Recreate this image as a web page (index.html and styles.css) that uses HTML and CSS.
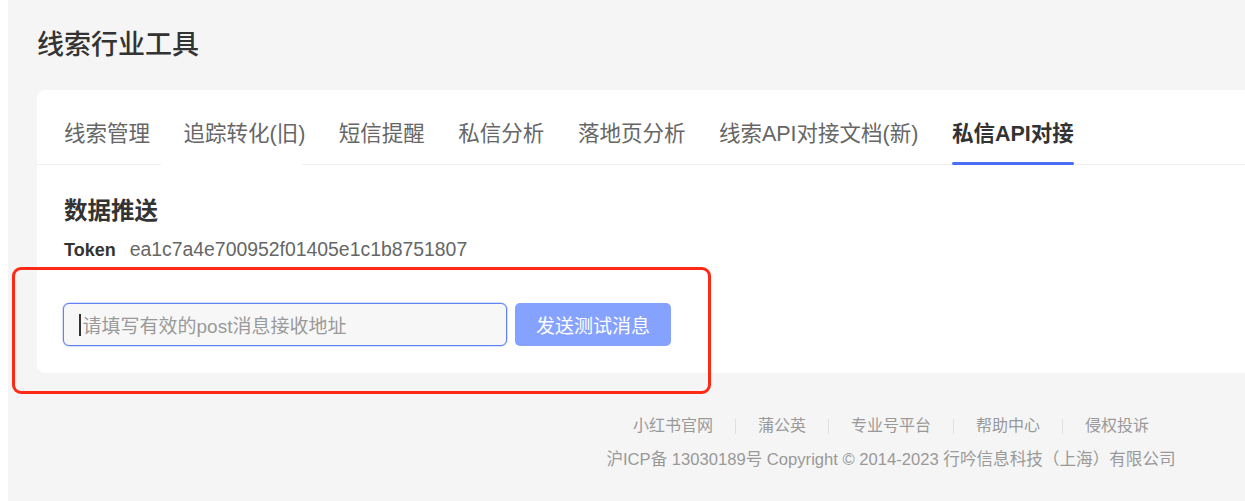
FILE: index.html
```html
<!DOCTYPE html>
<html lang="zh-CN">
<head>
<meta charset="utf-8">
<title>线索行业工具</title>
<link rel="stylesheet" href="styles.css">
</head>
<body>
<div class="page">
  <div class="main">
    <h1 class="page-title">线索行业工具</h1>
    <div class="card">
      <div class="tabs">
        <div class="tab">线索管理</div>
        <div class="tab tab-gap">追踪转化(旧)</div>
        <div class="tab">短信提醒</div>
        <div class="tab">私信分析</div>
        <div class="tab">落地页分析</div>
        <div class="tab">线索API对接文档(新)</div>
        <div class="tab active">私信API对接</div>
      </div>
      <div class="card-body">
        <h2 class="section-title">数据推送</h2>
        <div class="token-row"><span class="token-label">Token</span><span class="token-value">ea1c7a4e700952f01405e1c1b8751807</span></div>
        <div class="form-row">
          <div class="input"><span class="caret"></span><span class="placeholder">请填写有效的post消息接收地址</span></div>
          <button class="btn" type="button">发送测试消息</button>
        </div>
      </div>
    </div>
    <footer class="footer">
      <div class="links">
        <span class="link">小红书官网</span><span class="sep"></span>
        <span class="link">蒲公英</span><span class="sep"></span>
        <span class="link">专业号平台</span><span class="sep"></span>
        <span class="link">帮助中心</span><span class="sep"></span>
        <span class="link">侵权投诉</span>
      </div>
      <div class="copyright">沪ICP备 13030189号 Copyright © 2014-2023 行吟信息科技（上海）有限公司</div>
    </footer>
  </div>
  <div class="annotation"></div>
</div>
</body>
</html>
```
FILE: styles.css
```css
html, body {
  margin: 0;
  padding: 0;
  height: 501px;
  overflow: hidden;
  background: #ffffff;
}
body {
  font-family: "Liberation Sans", "Noto Sans CJK SC", sans-serif;
  color: #333333;
}
.page {
  position: relative;
  margin-left: 8px;
  height: 501px;
  background: #f5f5f5;
}
.main {
  padding: 26px 0 0 29px;
}
.page-title {
  margin: 0 0 26px 0;
  font-size: 27px;
  line-height: 38px;
  font-weight: 500;
  color: #333333;
}
.card {
  background: #ffffff;
  border-radius: 8px 0 0 8px;
  padding-bottom: 27px;
}
.tabs {
  display: flex;
  gap: 33.5px;
  padding: 0 27px;
  border-bottom: 1px solid #efefef;
}
.tab {
  position: relative;
  padding: 29px 0 15px;
  font-size: 21.5px;
  line-height: 30px;
  color: #666666;
  white-space: nowrap;
}
.tab.active {
  color: #333333;
  font-weight: 600;
}
.tab.active::after {
  content: "";
  position: absolute;
  left: 0;
  right: 0;
  bottom: -1px;
  height: 3px;
  border-radius: 2px;
  background: #4a6ef6;
}
.tab-gap::after {
  content: "";
  position: absolute;
  left: -23px;
  right: 3px;
  bottom: -1px;
  height: 1px;
  background: #ffffff;
}
.card-body {
  padding: 30px 26px 0;
}
.section-title {
  margin: 0 0 0 1px;
  font-size: 23.5px;
  line-height: 32px;
  font-weight: 700;
  color: #333333;
}
.token-row {
  margin-top: 8px;
  margin-left: 1px;
  font-size: 19.4px;
  line-height: 28px;
}
.token-label {
  font-size: 18px;
  font-weight: 600;
  color: #333333;
  margin-right: 14px;
}
.token-value {
  color: #666666;
}
.form-row {
  display: flex;
  gap: 8px;
  margin-top: 39px;
}
.input {
  box-sizing: border-box;
  width: 444px;
  height: 43px;
  display: flex;
  align-items: center;
  padding-left: 15px;
  border: 1px solid #5f82f4;
  box-shadow: 0 0 0 0.5px rgba(95, 130, 244, 0.5);
  border-radius: 6px;
  background: #f7f7f7;
}
.caret {
  width: 1.5px;
  height: 22px;
  background: #333333;
  margin-right: 2px;
}
.placeholder {
  font-size: 19px;
  color: #9a9a9a;
  white-space: nowrap;
}
.btn {
  box-sizing: border-box;
  width: 156px;
  height: 43px;
  border: none;
  border-radius: 5px;
  background: #86a2ff;
  color: #ffffff;
  font-family: inherit;
  font-size: 19px;
  padding: 0;
}
.footer {
  padding-top: 41px;
  padding-left: 500px;
  text-align: center;
  color: #999999;
  font-size: 16px;
  line-height: 24px;
}
.links {
  display: flex;
  justify-content: center;
  align-items: center;
}
.sep {
  width: 1px;
  height: 15px;
  background: #e0e0e0;
  margin: 0 22px;
}
.copyright {
  margin-top: 10px;
  font-size: 16.6px;
  white-space: nowrap;
}
.annotation {
  position: absolute;
  left: 4px;
  top: 267px;
  width: 699px;
  height: 127px;
  box-sizing: border-box;
  border: 3px solid #ff2a16;
  border-radius: 9px;
}
```
